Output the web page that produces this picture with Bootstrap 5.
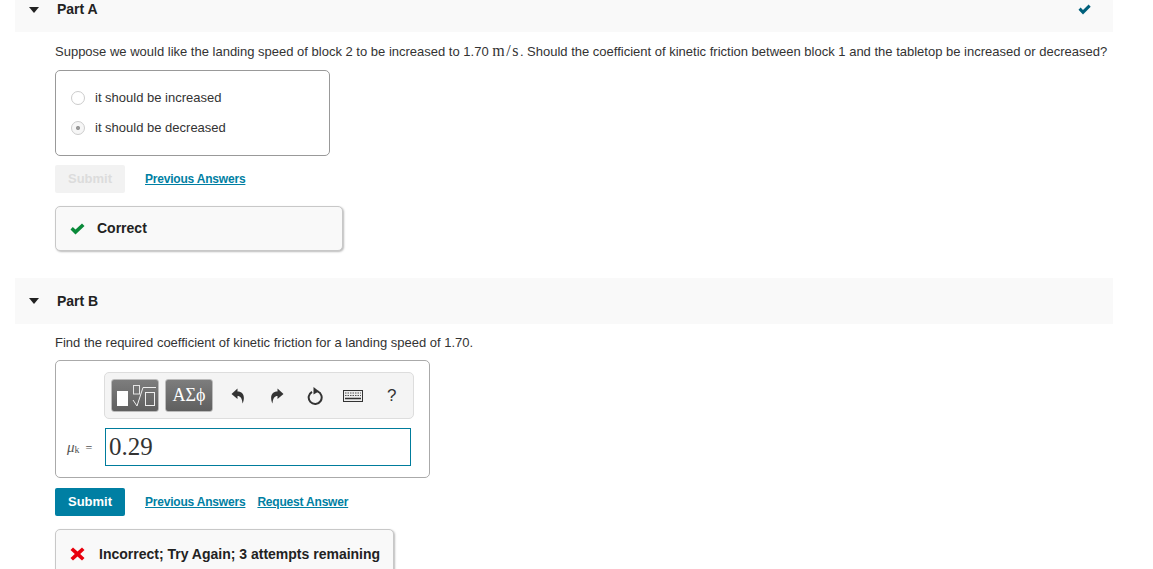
<!DOCTYPE html>
<html lang="en">
<head>
    <meta charset="UTF-8">
    <title>Part A and Part B</title>
    <meta name="viewport" content="width=device-width, initial-scale=1">
    <link href="https://cdn.jsdelivr.net/npm/bootstrap@5.3.0/dist/css/bootstrap.min.css" rel="stylesheet">
    <script src="https://cdn.jsdelivr.net/npm/bootstrap@5.3.0/dist/js/bootstrap.bundle.min.js"></script>
    <style>
        html, body { height: 569px; overflow: hidden; }
        body { font-family: "Liberation Sans", Arial, sans-serif; font-size: 13px; color: #333; background: #fff; }
        .sheet { width: 1098px; margin-left: 15px; margin-top: -13px; }
        .part-band { height: 45px; background: #f9f9f9; color: #222; font-size: 14px; font-weight: 700; padding-right: 22px; }
        .part-band-b { height: 46px; }
        .part-arrow { width: 0; height: 0; margin-left: 14px; margin-right: 18px; border-left: 5.5px solid transparent; border-right: 5.5px solid transparent; border-top: 6px solid #222; }
        .part-body { padding-left: 40px; }
        .prompt { line-height: 18px; white-space: nowrap; }
        .prompt-a { margin-top: 10px; }
        .prompt-b { margin-top: 10px; }
        .math-serif { font-family: "Liberation Serif", serif; font-size: 16px; letter-spacing: 1.5px; }
        .choice-box { width: 275px; height: 86px; margin-top: 9px; padding: 12px 15px; border: 1px solid #999; border-radius: 5px; }
        .choice-row { height: 30px; gap: 10px; }
        .radio-dot { width: 14px; height: 14px; border: 1px solid #ccc; border-radius: 50%; background: #fff; }
        .radio-dot.picked { background: radial-gradient(circle, #999 0 1.7px, #f6f6f6 2.4px); }
        .action-row { height: 28px; }
        .action-a { margin-top: 9px; }
        .action-b { margin-top: 10px; }
        .submit-btn { width: 70px; height: 28px; padding: 0; border: 0; border-radius: 2px; font-size: 13px; font-weight: 700; background: #007fa3; color: #fff; }
        .submit-btn:disabled { background: #f2f2f2; color: #dcdcdc; opacity: 1; }
        .answer-link { margin-left: 20px; font-size: 12px; font-weight: 700; letter-spacing: -.2px; color: #007fa3; }
        .answer-link + .answer-link { margin-left: 12px; }
        .verdict { height: 45px; padding-left: 14px; gap: 12px; background: #f9f9f9; border: 1px solid #c8c8c8; border-radius: 5px; box-shadow: 1px 1px 2px #bbb; color: #222; font-size: 14px; font-weight: 700; }
        .verdict-ok { width: 288px; margin-top: 13px; margin-bottom: 27px; }
        .verdict-bad { width: 339px; height: 50px; gap: 14px; margin-top: 13px; }
        .answer-box { width: 375px; height: 118px; margin-top: 8px; padding: 11px 15px 0 48px; border: 1px solid #aaa; border-radius: 5px; }
        .tool-strip { width: 310px; height: 47px; padding: 0 6px; background: #f4f4f4; border: 1px solid #ddd; border-radius: 5px; }
        .tool-btn { flex: 0 0 48px; height: 33px; margin-right: 6px; border-radius: 3px; background: linear-gradient(#7d7d7d, #5f5f5f); border: 1px solid #bbb; color: #fff; font-family: "Liberation Serif", serif; font-size: 18px; }
        .tool-icon { flex: 0 0 38.4px; color: #333; font-size: 17px; line-height: 18px; }
        .answer-row { margin-top: 9px; margin-left: -37px; gap: 9px; }
        .mu-label { flex: 0 0 29px; font-family: "Liberation Serif", serif; font-size: 15px; color: #555; white-space: nowrap; }
        .mu-label sub { font-size: 10px; bottom: -1px; }
        .mu-equals { margin-left: 6px; font-size: 12px; }
        .math-field { width: 306px; height: 38px; padding-left: 3px; border: 1px solid #007c9c; font-family: "Liberation Serif", serif; font-size: 25px; color: #333; line-height: 35px; }
    </style>
</head>
<body>
<div class="sheet">
    <div class="part-band d-flex align-items-center">
        <span class="part-arrow"></span>
        <span class="flex-grow-1">Part A</span>
        <svg width="13" height="11" viewBox="0 0 13 11"><path d="M0.5 5.8 L2.6 3.6 L5 6 L10.6 0.5 L12.7 2.7 L5 10.5 Z" fill="#00607c"/></svg>
    </div>
    <div class="part-body">
        <p class="prompt prompt-a mb-0">Suppose we would like the landing speed of block 2 to be increased to 1.70 <span class="math-serif">m/s</span>. Should the coefficient of kinetic friction between block 1 and the tabletop be increased or decreased?</p>
        <div class="choice-box">
            <div class="choice-row d-flex align-items-center"><span class="radio-dot"></span><span>it should be increased</span></div>
            <div class="choice-row d-flex align-items-center"><span class="radio-dot picked"></span><span>it should be decreased</span></div>
        </div>
        <div class="action-row action-a d-flex align-items-center">
            <button class="btn submit-btn" disabled>Submit</button>
            <a href="#" class="answer-link">Previous Answers</a>
        </div>
        <div class="verdict verdict-ok d-flex align-items-center">
            <svg width="15" height="12" viewBox="0 0 15 12"><path d="M0.5 6.5 L2.8 4 L5.5 6.6 L12 0.5 L14.5 3 L5.5 11.5 Z" fill="#0a8a3a"/></svg>
            <span>Correct</span>
        </div>
    </div>
    <div class="part-band part-band-b d-flex align-items-center">
        <span class="part-arrow"></span>
        <span class="flex-grow-1">Part B</span>
    </div>
    <div class="part-body">
        <p class="prompt prompt-b mb-0">Find the required coefficient of kinetic friction for a landing speed of 1.70.</p>
        <div class="answer-box">
            <div class="tool-strip d-flex align-items-center">
                <span class="tool-btn d-flex align-items-center justify-content-center">
                    <svg width="46" height="31" viewBox="0 0 46 31" fill="none"><rect x="5" y="11" width="11" height="15" fill="#fff"/><rect x="21.5" y="5.5" width="6" height="8.5" stroke="#e4e4e4"/><path d="M21 20 L25 26 L31 7.5 H44" stroke="#eee"/><rect x="33.5" y="12.5" width="9" height="13" stroke="#eee"/></svg>
                </span>
                <span class="tool-btn d-flex align-items-center justify-content-center">&Alpha;&Sigma;&#981;</span>
                <span class="tool-icon d-flex justify-content-center">
                    <svg width="14" height="16" viewBox="0 0 14 16"><path d="M6.5 0.5 L0.5 6 L6.5 11 V8 C9.5 8 11 10 11.5 15.5 C14.5 9 12.5 3.5 6.5 3.5 Z" fill="#333"/></svg>
                </span>
                <span class="tool-icon d-flex justify-content-center">
                    <svg width="14" height="16" viewBox="0 0 14 16"><path d="M7.5 0.5 L13.5 6 L7.5 11 V8 C4.5 8 3 10 2.5 15.5 C-0.5 9 1.5 3.5 7.5 3.5 Z" fill="#333"/></svg>
                </span>
                <span class="tool-icon d-flex justify-content-center">
                    <svg width="16" height="18" viewBox="0 0 16 18" fill="none"><path d="M5 4.8 A6.5 6.5 0 1 0 10.5 4.4" stroke="#333" stroke-width="2"/><path d="M6.5 0 L12 4.2 L6.5 7.5 Z" fill="#333"/></svg>
                </span>
                <span class="tool-icon d-flex justify-content-center">
                    <svg width="20" height="12" viewBox="0 0 20 12" fill="none"><rect x="0.5" y="0.5" width="19" height="11" fill="#eee" stroke="#333"/><path d="M2 3 H18 M2 5.5 H18" stroke="#555" stroke-dasharray="1.5 1"/><path d="M2 8.5 H18" stroke="#333" stroke-width="1.5"/></svg>
                </span>
                <span class="tool-icon d-flex justify-content-center">?</span>
            </div>
            <div class="answer-row d-flex align-items-center">
                <span class="mu-label"><i>&mu;</i><sub>k</sub><span class="mu-equals">=</span></span>
                <div class="math-field">0.29</div>
            </div>
        </div>
        <div class="action-row action-b d-flex align-items-center">
            <button class="btn submit-btn">Submit</button>
            <a href="#" class="answer-link">Previous Answers</a>
            <a href="#" class="answer-link">Request Answer</a>
        </div>
        <div class="verdict verdict-bad d-flex align-items-center">
            <svg width="15" height="14" viewBox="0 0 15 14"><path d="M3 0.5 L7.5 4.5 L12 0.5 L14.5 3 L10.2 7 L14.5 11 L12 13.5 L7.5 9.5 L3 13.5 L0.5 11 L4.8 7 L0.5 3 Z" fill="#e8000d"/></svg>
            <span>Incorrect; Try Again; 3 attempts remaining</span>
        </div>
    </div>
</div>
</body>
</html>
